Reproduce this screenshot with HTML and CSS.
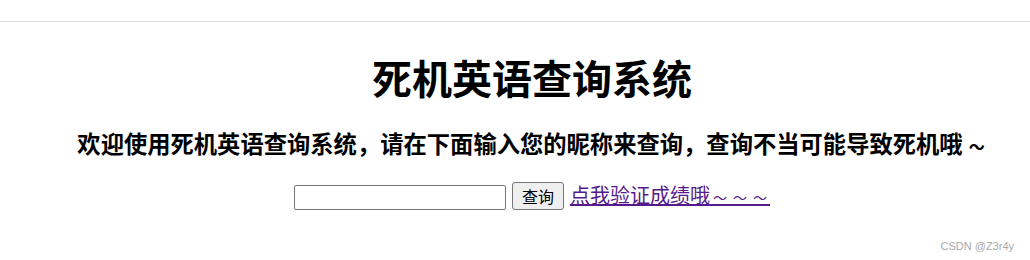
FILE: index.html
```html
<!DOCTYPE html>
<html lang="zh-CN">
<head>
<meta charset="utf-8">
<title>死机英语查询系统</title>
<link rel="stylesheet" href="styles.css">
</head>
<body>
<div class="topbar"></div>
<main class="page">
  <h1 class="title">死机英语查询系统</h1>
  <h2 class="subtitle">欢迎使用死机英语查询系统，请在下面输入您的昵称来查询，查询不当可能导致死机哦<span class="tilde tilde-lg">～</span></h2>
  <form class="query-row">
    <input class="query-input" type="text" name="name">
    <button class="query-btn" type="button">查询</button>
    <a class="verify-link" href="#">点我验证成绩哦<span class="tilde">～</span><span class="tilde">～</span><span class="tilde">～</span></a>
  </form>
</main>
<div class="watermark">CSDN @Z3r4y</div>
</body>
</html>
```

FILE: styles.css
```css
html, body {
  margin: 0;
  padding: 0;
  background: #ffffff;
}

body {
  position: relative;
  width: 1030px;
  height: 260px;
  overflow: hidden;
  font-family: "Noto Sans CJK SC", "Noto Sans", "Liberation Sans", sans-serif;
  color: #000;
}

.topbar {
  height: 21px;
  border-bottom: 1px solid #dcdcdc;
}

.page {
  padding-left: 34px;
  display: flex;
  flex-direction: column;
  align-items: center;
}

.title {
  margin: 31px 0 0;
  font-size: 40px;
  line-height: 48px;
  font-weight: 700;
}

.subtitle {
  margin: 27px 0 0;
  font-size: 23.3px;
  line-height: 30px;
  font-weight: 700;
}

.tilde {
  font-size: 14px;
  line-height: 1;
  padding: 0 3px;
}

.tilde-lg {
  font-size: 16px;
  padding: 0 2px 0 6px;
}

.query-row {
  margin: 24px 0 0;
  display: flex;
  align-items: flex-end;
}

.query-input {
  box-sizing: border-box;
  width: 212px;
  height: 25px;
  margin: 0;
  border: 1px solid #767676;
  border-radius: 2px;
  padding: 0 2px;
  background: #fff;
}

.query-btn {
  box-sizing: border-box;
  width: 52px;
  height: 28px;
  margin: 0 0 0 6px;
  padding: 0;
  border: 1px solid #767676;
  border-radius: 3px;
  background: #efefef;
  font-family: "Noto Sans CJK SC", sans-serif;
  font-size: 16px;
  line-height: 26px;
  color: #000;
}

.verify-link {
  margin: 0 0 4px 6px;
  font-size: 20px;
  line-height: 18px;
  color: #551a8b;
  text-decoration: none;
  border-bottom: 2px solid #551a8b;
}

.watermark {
  position: absolute;
  right: 16px;
  top: 239px;
  font-family: "Liberation Sans", Arial, sans-serif;
  font-size: 11px;
  line-height: 14px;
  color: #a8a8a8;
}
```
